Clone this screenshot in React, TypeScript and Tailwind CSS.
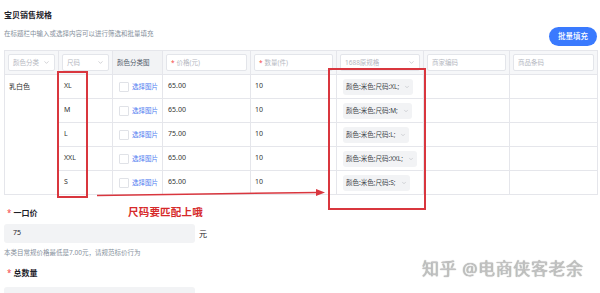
import { ChevronDown } from "lucide-react";

const rows = [
  { size: "XL", price: "65.00", qty: "10", spec: "颜色:米色;尺码:XL;" },
  { size: "M", price: "65.00", qty: "10", spec: "颜色:米色;尺码:M;" },
  { size: "L", price: "75.00", qty: "10", spec: "颜色:米色;尺码:L;" },
  { size: "XXL", price: "65.00", qty: "10", spec: "颜色:米色;尺码:XXL;" },
  { size: "S", price: "65.00", qty: "10", spec: "颜色:米色;尺码:S;" },
];

function HeadInput({ text, star, caret }: { text: string; star?: boolean; caret?: boolean }) {
  return (
    <div className="mx-[3px] h-[17px] bg-white border border-[#e3e5ea] rounded-[2px] flex items-center px-[4px] text-[6.5px] text-[#b5b8bf]">
      {star && <span className="text-[#f53f3f] mr-[2px]">*</span>}
      <span className="flex-1">{text}</span>
      {caret && <ChevronDown size={7} strokeWidth={1.5} className="text-[#9a9da4]" />}
    </div>
  );
}

export default function App() {
  return (
    <div
      className="relative w-[600px] h-[293px] overflow-hidden bg-white text-[#333]"
      style={{ fontFamily: '"Noto Sans", "Noto Sans CJK SC", sans-serif' }}
    >
      <div className="pl-[4px] pr-[3px] pt-[10px]">
        <div className="text-[8px] leading-[10px] font-bold text-[#1d2129]">宝贝销售规格</div>
        <div className="mt-[7px] flex items-start justify-between">
          <div className="mt-[3px] text-[6.5px] leading-[8px] text-[#86909c]">
            在标题栏中输入或选择内容可以进行筛选和批量填充
          </div>
          <button className="h-[19px] w-[48px] rounded-full bg-[#3a7afe] text-white text-[7.5px] font-medium">
            批量填充
          </button>
        </div>

        <table className="mt-[4px] border-collapse table-fixed w-[593px] text-[7px] text-[#333]">
          <colgroup>
            <col className="w-[54px]" />
            <col className="w-[54px]" />
            <col className="w-[50px]" />
            <col className="w-[88px]" />
            <col className="w-[86px]" />
            <col className="w-[87px]" />
            <col className="w-[86px]" />
            <col className="w-[88px]" />
          </colgroup>
          <thead>
            <tr className="h-[24px] bg-[#f6f7f9]">
              <th className="border border-[#e5e6eb] p-0 font-normal text-left"><HeadInput text="颜色分类" caret /></th>
              <th className="border border-[#e5e6eb] p-0 font-normal text-left"><HeadInput text="尺码" caret /></th>
              <th className="border border-[#e5e6eb] p-0 pl-[4px] font-normal text-left text-[6.5px] text-[#4e5969] bg-[#f2f3f5]">颜色分类图</th>
              <th className="border border-[#e5e6eb] p-0 font-normal text-left"><HeadInput text="价格(元)" star /></th>
              <th className="border border-[#e5e6eb] p-0 font-normal text-left"><HeadInput text="数量(件)" star /></th>
              <th className="border border-[#e5e6eb] p-0 font-normal text-left"><HeadInput text="1688原规格" caret /></th>
              <th className="border border-[#e5e6eb] p-0 font-normal text-left"><HeadInput text="商家编码" /></th>
              <th className="border border-[#e5e6eb] p-0 font-normal text-left"><HeadInput text="商品条码" /></th>
            </tr>
          </thead>
          <tbody>
            {rows.map((r, i) => (
              <tr key={r.size} className="h-[24px]">
                {i === 0 && (
                  <td rowSpan={5} className="border border-[#e5e6eb] align-top pl-[4px] pt-[7px] leading-[10px]">
                    乳白色
                  </td>
                )}
                <td className="border border-[#e5e6eb] pl-[5px]">{r.size}</td>
                <td className="border border-[#e5e6eb] pl-[6px]">
                  <div className="flex items-center">
                    <span className="w-[10px] h-[10px] border border-[#e0e2e7] rounded-[1px] bg-white" />
                    <span className="ml-[3px] text-[6.5px] text-[#4d7bf0]">选择图片</span>
                  </div>
                </td>
                <td className="border border-[#e5e6eb] pl-[5px]">{r.price}</td>
                <td className="border border-[#e5e6eb] pl-[4px]">{r.qty}</td>
                <td className="border border-[#e5e6eb] pl-[6px]">
                  <span className="inline-flex items-center h-[16px] px-[3px] rounded-[3px] bg-[#f2f3f5] text-[6.5px] text-[#3a3f47]">
                    {r.spec}
                    <ChevronDown size={6} strokeWidth={1.5} className="ml-[5px] text-[#9a9da4]" />
                  </span>
                </td>
                <td className="border border-[#e5e6eb]" />
                <td className="border border-[#e5e6eb]" />
              </tr>
            ))}
          </tbody>
        </table>

        <div className="mt-[13px] flex items-center text-[8px] leading-[10px] font-bold text-[#1d2129]">
          <span className="text-[#f53f3f] ml-[3px] mr-[2px] font-normal">*</span>一口价
        </div>
        <div className="mt-[6px] flex items-center">
          <div className="w-[191px] h-[19px] rounded-[3px] bg-[#f2f3f5] flex items-center pl-[9px] text-[7px] text-[#1d2129]">75</div>
          <span className="ml-[4px] text-[8px] text-[#1d2129]">元</span>
        </div>
        <div className="mt-[6px] text-[6.5px] leading-[8px] text-[#86909c]">
          本类目常规价格最低是7.00元，请规范标价行为
        </div>
        <div className="mt-[11px] flex items-center text-[8px] leading-[10px] font-bold text-[#1d2129]">
          <span className="text-[#f53f3f] ml-[3px] mr-[2px] font-normal">*</span>总数量
        </div>
        <div className="mt-[9px] flex items-center">
          <div className="w-[191px] h-[19px] rounded-[3px] bg-[#f2f3f5] flex items-center pl-[9px] text-[7px] text-[#c9cdd4]">50</div>
          <span className="ml-[4px] text-[8px] text-[#1d2129]">件</span>
        </div>
      </div>

      {/* annotations */}
      <div className="absolute left-[57px] top-[71px] w-[31px] h-[127px] border-2 border-[#d9363e]" />
      <div className="absolute left-[328px] top-[68px] w-[98px] h-[142px] border-2 border-[#d9363e]" />
      <svg className="absolute left-0 top-0" width="600" height="293">
        <line x1="97" y1="195.5" x2="318" y2="192.5" stroke="#d9363e" strokeWidth="1.5" />
        <polygon points="316,189 325,192.5 316,196" fill="#d9363e" />
      </svg>
      <div className="absolute left-[128px] top-[205px] text-[10.5px] leading-[14px] font-bold text-[#d62a2a] tracking-[0.2px]">
        尺码要匹配上哦
      </div>
      <div className="absolute left-[422px] top-[258px] text-[17px] leading-[21px] tracking-[0.6px] text-[#c2c2c2] [text-shadow:0_0_1px_#8a8a8a]">
        知乎 @电商侠客老余
      </div>
    </div>
  );
}
